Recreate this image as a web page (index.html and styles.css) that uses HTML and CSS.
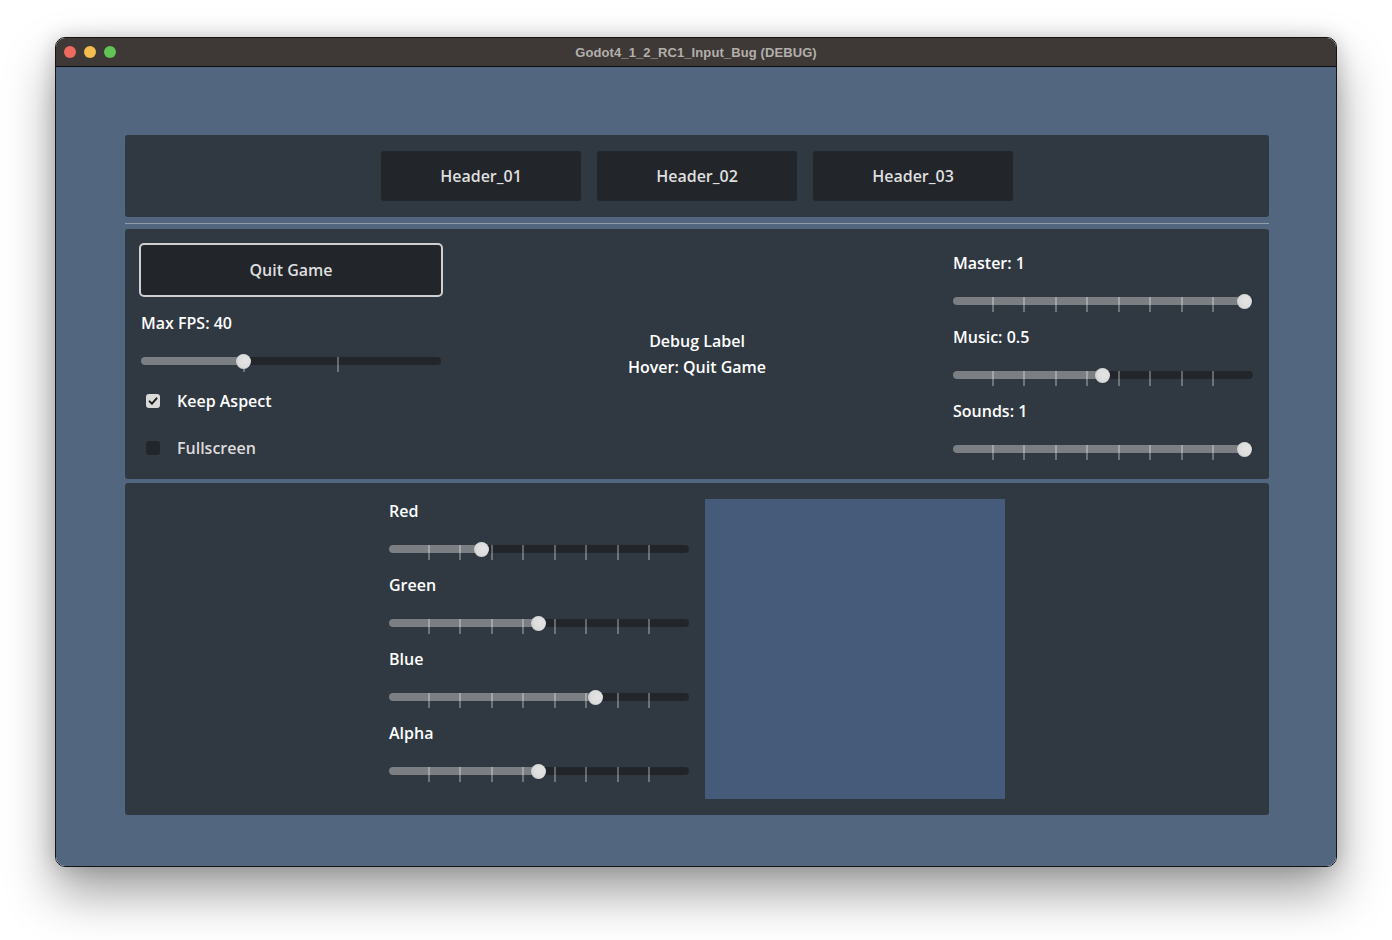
FILE: index.html
```html
<!DOCTYPE html>
<html>
<head>
<meta charset="utf-8">
<title>Godot4_1_2_RC1_Input_Bug (DEBUG)</title>
<link rel="stylesheet" href="styles.css">
</head>
<body>
<div class="desktop">
<div class="window">
  <div class="titlebar">
    <div class="lights">
      <span class="light red"></span>
      <span class="light yellow"></span>
      <span class="light green"></span>
    </div>
    <div class="title">Godot4_1_2_RC1_Input_Bug (DEBUG)</div>
    <div></div>
  </div>
  <div class="content">
    <div class="panel top-panel">
      <div class="hbtn">Header_01</div>
      <div class="hbtn">Header_02</div>
      <div class="hbtn">Header_03</div>
    </div>
    <div class="sep"><div class="sep-line"></div></div>
    <div class="panel mid-panel">
      <div class="col left-col">
        <div class="quit">Quit Game</div>
        <div class="label fps-label">Max FPS: 40</div>
        <div class="slider fps-slider">
          <div class="track"><div class="fill" style="width:102.7px"></div></div>
          <div class="ticks"><i></i><i></i><i></i><i></i></div>
          <div class="grab" style="left:94.7px"></div>
        </div>
        <div class="check-row keep">
          <svg class="box" width="14" height="14" viewBox="0 0 14 14"><rect x="0" y="0" width="14" height="14" rx="3" fill="#dadada"/><path d="M3.6 7.4 L6 9.7 L10.6 4.4" fill="none" stroke="#1c1e21" stroke-width="2" stroke-linecap="round" stroke-linejoin="round"/></svg>
          <span class="check-text on">Keep Aspect</span>
        </div>
        <div class="check-row full">
          <span class="box off"></span>
          <span class="check-text">Fullscreen</span>
        </div>
      </div>
      <div class="debug">
        <div>Debug Label</div>
        <div>Hover: Quit Game</div>
      </div>
      <div class="col right-col">
        <div class="group">
          <div class="label">Master: 1</div>
          <div class="slider">
            <div class="track"><div class="fill" style="width:292px"></div></div>
            <div class="ticks"><i></i><i></i><i></i><i></i><i></i><i></i><i></i><i></i><i></i><i></i></div>
            <div class="grab" style="left:284px"></div>
          </div>
        </div>
        <div class="group">
          <div class="label">Music: 0.5</div>
          <div class="slider">
            <div class="track"><div class="fill" style="width:150px"></div></div>
            <div class="ticks"><i></i><i></i><i></i><i></i><i></i><i></i><i></i><i></i><i></i><i></i></div>
            <div class="grab" style="left:142px"></div>
          </div>
        </div>
        <div class="group">
          <div class="label">Sounds: 1</div>
          <div class="slider">
            <div class="track"><div class="fill" style="width:292px"></div></div>
            <div class="ticks"><i></i><i></i><i></i><i></i><i></i><i></i><i></i><i></i><i></i><i></i></div>
            <div class="grab" style="left:284px"></div>
          </div>
        </div>
      </div>
    </div>
    <div class="gap"></div>
    <div class="panel bottom-panel">
      <div class="col color-col">
        <div class="group">
          <div class="label">Red</div>
          <div class="slider">
            <div class="track"><div class="fill" style="width:93.2px"></div></div>
            <div class="ticks"><i></i><i></i><i></i><i></i><i></i><i></i><i></i><i></i><i></i><i></i></div>
            <div class="grab" style="left:85.2px"></div>
          </div>
        </div>
        <div class="group">
          <div class="label">Green</div>
          <div class="slider">
            <div class="track"><div class="fill" style="width:150px"></div></div>
            <div class="ticks"><i></i><i></i><i></i><i></i><i></i><i></i><i></i><i></i><i></i><i></i></div>
            <div class="grab" style="left:142px"></div>
          </div>
        </div>
        <div class="group">
          <div class="label">Blue</div>
          <div class="slider">
            <div class="track"><div class="fill" style="width:206.8px"></div></div>
            <div class="ticks"><i></i><i></i><i></i><i></i><i></i><i></i><i></i><i></i><i></i><i></i></div>
            <div class="grab" style="left:198.8px"></div>
          </div>
        </div>
        <div class="group">
          <div class="label">Alpha</div>
          <div class="slider">
            <div class="track"><div class="fill" style="width:150px"></div></div>
            <div class="ticks"><i></i><i></i><i></i><i></i><i></i><i></i><i></i><i></i><i></i><i></i></div>
            <div class="grab" style="left:142px"></div>
          </div>
        </div>
      </div>
      <div class="swatch"></div>
    </div>
  </div>
</div>
</div>
</body>
</html>
```
FILE: styles.css
```css
* { box-sizing: border-box; }

html, body {
  margin: 0;
  background: #ffffff;
}

body {
  font-family: "Open Sans", "Noto Sans", sans-serif;
}

.desktop {
  width: 1392px;
  height: 940px;
  padding: 37px 0 0 55px;
  overflow: hidden;
}

.window {
  width: 1282px;
  height: 830px;
  border: 1px solid #141414;
  border-radius: 10px;
  overflow: hidden;
  box-shadow: 0 26px 50px rgba(0, 0, 0, 0.38), 0 0 20px rgba(0, 0, 0, 0.18);
}

.titlebar {
  height: 29px;
  background: #3e3936;
  border-bottom: 1px solid #0e0e0e;
  display: grid;
  grid-template-columns: 1fr auto 1fr;
  align-items: center;
}

.lights {
  display: flex;
  gap: 8px;
  padding-left: 8px;
}

.light {
  width: 12px;
  height: 12px;
  border-radius: 50%;
  display: block;
}
.light.red { background: #ee6a5f; }
.light.yellow { background: #f5bd4f; }
.light.green { background: #61c454; }

.title {
  font-family: "Liberation Sans", Arial, sans-serif;
  font-weight: 700;
  font-size: 13px;
  color: #b3afac;
  letter-spacing: 0.1px;
}

.content {
  height: 799px;
  background: #52667f;
  padding: 68px 67px 0 69px;
}

.panel {
  background: #303842;
  border-radius: 3px;
}

.top-panel {
  height: 82px;
  display: flex;
  justify-content: center;
  align-items: center;
  gap: 16px;
}

.hbtn {
  width: 200px;
  height: 50px;
  background: #22262a;
  border-radius: 3px;
  color: #dfdfdf;
  font-weight: 600;
  font-size: 16px;
  display: flex;
  align-items: center;
  justify-content: center;
}

.sep {
  height: 12px;
  padding-top: 6px;
}
.sep-line {
  height: 1px;
  background: #929caa;
}

.mid-panel {
  height: 250px;
  display: flex;
  padding: 16px;
  gap: 16px;
}

.col {
  width: 300px;
  display: flex;
  flex-direction: column;
}

.quit {
  height: 50px;
  background: #22262a;
  border-radius: 3px;
  box-shadow: 0 0 0 2px #cfcfcf;
  color: #dfdfdf;
  font-weight: 600;
  font-size: 16px;
  display: flex;
  align-items: center;
  justify-content: center;
}

.label {
  height: 23px;
  line-height: 25px;
  font-size: 16px;
  font-weight: 600;
  color: #ffffff;
  white-space: nowrap;
}

.fps-label { margin-top: 16px; }
.fps-slider { margin-top: 19px; }

.check-row {
  height: 23px;
  display: flex;
  align-items: center;
  padding-left: 5px;
  gap: 17px;
}
.keep { margin-top: 20px; }
.full { margin-top: 24px; }

.box {
  width: 14px;
  height: 14px;
  display: block;
  flex: none;
}
.box.off {
  background: #22262a;
  border-radius: 3px;
}

.check-text {
  font-size: 16px;
  font-weight: 600;
  line-height: 23px;
  padding-top: 2px;
  color: #dcdcdc;
}
.check-text.on { color: #ffffff; }

.debug {
  flex: 1;
  display: flex;
  flex-direction: column;
  justify-content: center;
  align-items: center;
  font-size: 16px;
  font-weight: 600;
  line-height: 26px;
  color: #ffffff;
}

.right-col { padding-top: 6px; }

.group { margin-bottom: 16px; }
.group .slider { margin-top: 19px; }

/* slider */
.slider {
  position: relative;
  height: 16px;
}
.track {
  position: absolute;
  left: 0;
  right: 0;
  top: 4px;
  height: 8px;
  border-radius: 4px;
  background: #22262a;
  overflow: hidden;
}
.fill {
  height: 100%;
  background: #7b7e82;
}
.ticks {
  position: absolute;
  left: 7px;
  right: 7px;
  top: 4px;
  height: 15px;
  display: flex;
  justify-content: space-between;
}
.ticks i {
  display: block;
  width: 2px;
  height: 15px;
  background: rgba(255, 255, 255, 0.3);
}
.ticks i:first-child,
.ticks i:last-child { visibility: hidden; }

.grab {
  position: absolute;
  top: 1px;
  width: 15px;
  height: 15px;
  border-radius: 50%;
  background: radial-gradient(circle at 62% 45%, #e4e4e4 0%, #dcdcdc 55%, #b9b9b9 100%);
}

.gap { height: 4px; }

.bottom-panel {
  height: 332px;
  display: flex;
  justify-content: center;
  padding: 16px;
  gap: 16px;
}

.swatch {
  width: 300px;
  height: 300px;
  background: #455b79;
}
```
